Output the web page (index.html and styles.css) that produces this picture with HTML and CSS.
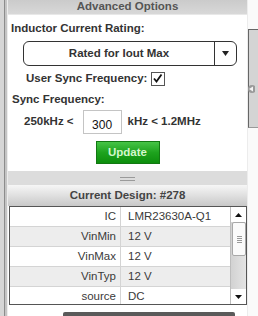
FILE: index.html
```html
<!DOCTYPE html>
<html>
<head>
<meta charset="utf-8">
<link rel="stylesheet" href="styles.css">
</head>
<body>
<div class="app">
  <div class="leftbar"></div>
  <div class="panel">
    <div class="hdr">Advanced Options</div>
    <div class="content">
      <div class="label l1">Inductor Current Rating:</div>
      <div class="select">
        <span class="sel-text">Rated for Iout Max</span>
        <span class="sel-btn"><svg width="7" height="5" viewBox="0 0 7 5"><path d="M0 0H7L3.5 5Z" fill="#222"/></svg></span>
      </div>
      <div class="row sync">
        <span class="label">User Sync Frequency:</span>
        <span class="check"><svg width="13" height="13" viewBox="0 0 13 13"><path d="M3 6.5L5.5 9.5L10.5 2.5" fill="none" stroke="#111" stroke-width="1.8"/></svg></span>
      </div>
      <div class="label l2">Sync Frequency:</div>
      <div class="row freq">
        <span class="label">250kHz &lt;</span>
        <span class="input">300</span>
        <span class="label">kHz &lt; 1.2MHz</span>
      </div>
      <div class="btnwrap"><span class="update">Update</span></div>
    </div>
    <div class="splitter"><span class="grip"></span></div>
    <div class="hdr2">Current Design: #278</div>
    <div class="table">
      <div class="rows">
        <div class="tr"><span class="k">IC</span><span class="v">LMR23630A-Q1</span></div>
        <div class="tr alt"><span class="k">VinMin</span><span class="v">12 V</span></div>
        <div class="tr"><span class="k">VinMax</span><span class="v">12 V</span></div>
        <div class="tr alt"><span class="k">VinTyp</span><span class="v">12 V</span></div>
        <div class="tr"><span class="k">source</span><span class="v">DC</span></div>
      </div>
      <div class="scroll">
        <div class="sbtn"><svg width="7" height="4" viewBox="0 0 7 4"><path d="M0 4H7L3.5 0Z" fill="#111"/></svg></div>
        <div class="thumb"><span class="tgrip"></span></div>
        <div class="track"></div>
        <div class="sbtn"><svg width="7" height="4" viewBox="0 0 7 4"><path d="M0 0H7L3.5 4Z" fill="#111"/></svg></div>
      </div>
    </div>
    <div class="bottombar"></div>
  </div>
  <div class="rightside">
    <div class="tab"><svg width="8" height="8" viewBox="0 0 8 8"><circle cx="5" cy="4" r="4" fill="#9a9a9a"/><path d="M2 4L6 1.5V6.5Z" fill="#f4f4f4"/></svg></div>
  </div>
</div>
</body>
</html>
```
FILE: styles.css
```css
html, body {
  margin: 0;
  padding: 0;
  width: 258px;
  height: 316px;
  overflow: hidden;
  background: #fafafa;
  font-family: "Liberation Sans", Arial, sans-serif;
  color: #333;
}
.app {
  display: flex;
  height: 316px;
}
.leftbar {
  width: 8px;
  flex: none;
  background: linear-gradient(to right, #d6d6d6 0, #d6d6d6 4px, #8c8c8c 4px, #8c8c8c 5px, #c4c4c4 5px, #c4c4c4 7px, #ececec 7px);
}
.panel {
  width: 239px;
  flex: none;
  background: #fff;
  border-right: 1px solid #ececec;
  display: flex;
  flex-direction: column;
}
.hdr {
  height: 14px;
  line-height: 12px;
  background: linear-gradient(#cbcbcb, #d8d8d8);
  border-bottom: 1px solid #e8e8e8;
  text-align: center;
  font-weight: bold;
  font-size: 11.5px;
  color: #555;
  overflow: hidden;
}
.content {
  display: flex;
  flex-direction: column;
  align-items: flex-start;
}
.label {
  font-weight: bold;
  font-size: 11.5px;
  color: #333;
  line-height: 15px;
  white-space: nowrap;
}
.l1 {
  margin: 6px 0 0 3px;
}
.select {
  margin: 5px 0 0 15px;
  width: 212px;
  height: 23px;
  border: 1px solid #333;
  border-radius: 6px;
  display: flex;
}
.sel-text {
  flex: 1;
  text-align: center;
  font-weight: bold;
  font-size: 11.5px;
  line-height: 23px;
  color: #333;
}
.sel-btn {
  width: 21px;
  border-left: 1px solid #333;
  display: flex;
  align-items: center;
  justify-content: center;
}
.row {
  display: flex;
  align-items: center;
}
.sync {
  margin: 5px 0 0 18px;
  height: 16px;
}
.check {
  width: 12px;
  height: 12px;
  margin-left: 4px;
  border: 1px solid #555;
  background: #fff;
  display: flex;
}
.check svg {
  margin: -1px 0 0 -1px;
}
.l2 {
  margin: 5px 0 0 4px;
}
.freq {
  margin: 3px 0 0 16px;
}
.input {
  width: 37px;
  height: 22px;
  border: 1px solid #c4c4c4;
  margin: 0 6px 0 9px;
  font-size: 12px;
  color: #111;
  text-align: center;
  line-height: 28px;
  box-sizing: content-box;
}
.btnwrap {
  align-self: stretch;
  display: flex;
  justify-content: center;
  margin-top: 7px;
}
.update {
  width: 62px;
  height: 21px;
  border: 1px solid #127812;
  background: linear-gradient(#46c446, #1ea31e 50%, #0d8e0d);
  color: #d4f7cc;
  font-weight: bold;
  font-size: 11.5px;
  line-height: 21px;
  text-align: center;
}
.splitter {
  margin-top: 7px;
  height: 15px;
  background: #dcdcdc;
  display: flex;
  justify-content: center;
  align-items: center;
}
.grip {
  width: 15px;
  height: 2px;
  border-top: 1px solid #9a9a9a;
  border-bottom: 1px solid #9a9a9a;
  margin-top: 2px;
}
.hdr2 {
  height: 21px;
  line-height: 21px;
  background: linear-gradient(#f6f6f6, #e2e2e2 45%, #c8c8c8);
  text-align: center;
  font-weight: bold;
  font-size: 11.5px;
  color: #444;
}
.table {
  margin-left: 1px;
  width: 236px;
  height: 99px;
  border: 1px solid #555;
  display: flex;
  overflow: hidden;
}
.rows {
  flex: 1;
  display: flex;
  flex-direction: column;
}
.tr {
  height: 20px;
  flex: none;
  display: flex;
  border-bottom: 1px solid #d4d4d4;
  box-sizing: border-box;
  font-size: 11.5px;
  color: #3a3a3a;
  line-height: 19px;
}
.tr.alt {
  background: #ededed;
}
.k {
  width: 106px;
  padding-right: 4px;
  text-align: right;
  border-right: 1px solid #d4d4d4;
}
.v {
  padding-left: 7px;
}
.scroll {
  width: 15px;
  border-left: 1px solid #bdbdbd;
  display: flex;
  flex-direction: column;
  background: linear-gradient(to right, #d2d2d2, #e4e4e4);
}
.sbtn {
  height: 15px;
  flex: none;
  background: #fff;
  display: flex;
  align-items: center;
  justify-content: center;
}
.thumb {
  height: 32px;
  flex: none;
  margin: 0 0 0 1px;
  width: 12px;
  background: #fafafa;
  border: 1px solid #a8a8a8;
  border-radius: 2px;
  display: flex;
  align-items: center;
  justify-content: center;
}
.tgrip {
  width: 5px;
  height: 7px;
  background: repeating-linear-gradient(#999 0, #999 1px, transparent 1px, transparent 2px);
}
.track {
  flex: 1;
}
.bottombar {
  margin: 7px 0 0 55px;
  width: 172px;
  height: 4px;
  background: #5a5a5a;
  border-radius: 2px 2px 0 0;
}
.rightside {
  width: 10px;
  flex: none;
}
.tab {
  margin-top: 29px;
  height: 97px;
  background: #d4d4d4;
  border-top: 1px solid #666;
  border-left: 1px solid #666;
  border-bottom: 1px solid #999;
  display: flex;
  align-items: flex-start;
}
.tab svg {
  margin-top: 55px;
  margin-left: -2px;
}
```
